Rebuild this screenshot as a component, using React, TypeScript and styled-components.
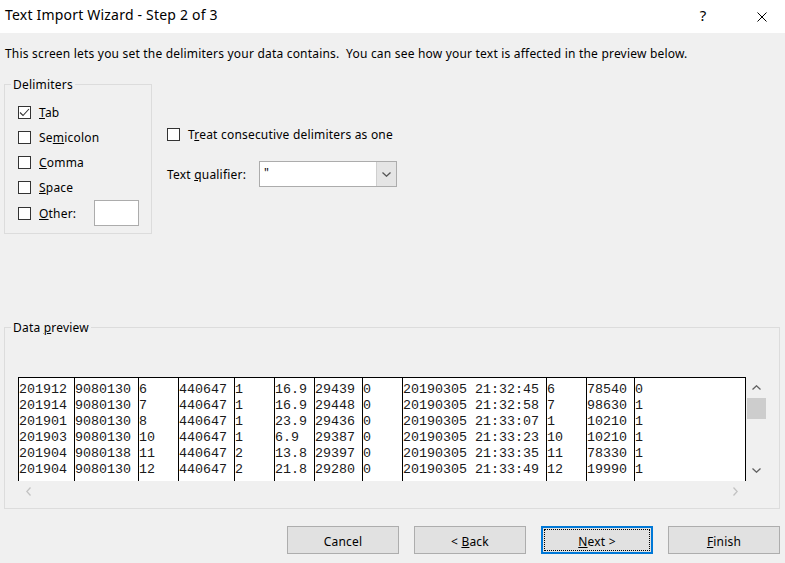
import React from "react";
import styled, { createGlobalStyle } from "styled-components";

const UI = `"Noto Sans", "Open Sans", "Liberation Sans", sans-serif`;

const Global = createGlobalStyle`
  html, body { margin: 0; padding: 0; background: #f0f0f0; }
  body { font-family: ${UI}; font-size: 12px; letter-spacing: 0.2px; color: #000; }
  * { box-sizing: border-box; }
`;

const Window = styled.div`
  width: 785px;
  height: 563px;
  display: flex;
  flex-direction: column;
  background: #f0f0f0;
  overflow: hidden;
`;

const TitleBar = styled.div`
  height: 33px;
  flex-shrink: 0;
  background: #fff;
  display: flex;
  align-items: center;
`;

const Title = styled.div`
  flex: 1;
  padding-left: 5px;
  font-size: 14px;
  line-height: 20px;
  margin-top: -3px;
`;

const CaptionButton = styled.div<{ $w: number; $mr?: number; $pb?: number }>`
  width: ${(p) => p.$w}px;
  margin-right: ${(p) => p.$mr ?? 0}px;
  height: 33px;
  padding-bottom: ${(p) => p.$pb ?? 0}px;
  display: flex;
  align-items: center;
  justify-content: center;
  font-size: 15px;
  color: #000;
`;

const Body = styled.div`
  flex: 1;
  display: flex;
  flex-direction: column;
  padding: 0 5px 0 4px;
`;

const Intro = styled.div`
  margin: 13px 0 0 1px;
  line-height: 16px;
  white-space: pre;
`;

const TopRow = styled.div`
  display: flex;
  align-items: flex-start;
  margin-top: 13px;
`;

const GroupBox = styled.fieldset<{ $w?: number }>`
  margin: 0;
  padding: 0;
  min-width: 0;
  border: 1px solid #dcdcdc;
  ${(p) => (p.$w ? `width: ${p.$w}px;` : "")}
`;

const Legend = styled.legend`
  margin-left: 6px;
  padding: 2px 2px 0;
  line-height: 16px;
  font-size: 12px;
`;

const DelimList = styled.div`
  display: flex;
  flex-direction: column;
  padding: 7px 12px 7px 13px;
`;

const CheckRow = styled.label<{ $h?: number }>`
  display: flex;
  align-items: center;
  gap: 8px;
  height: ${(p) => p.$h ?? 25}px;
  line-height: 16px;
`;

const CheckText = styled.span`
  padding-top: 1px;
`;

const Box = styled.span`
  width: 13px;
  height: 13px;
  flex-shrink: 0;
  border: 1px solid #333;
  background: #fff;
  display: flex;
  align-items: center;
  justify-content: center;
`;

const OtherInput = styled.span`
  margin-left: auto;
  width: 45px;
  height: 26px;
  background: #fff;
  border: 1px solid #acacac;
`;

const Options = styled.div`
  display: flex;
  flex-direction: column;
  margin-left: 15px;
  padding-top: 47px;
`;

const QualifierRow = styled.div`
  display: flex;
  align-items: center;
  margin-top: 14px;
  height: 26px;
`;

const QualifierLabel = styled.span`
  width: 92px;
  line-height: 16px;
  padding-top: 2px;
`;

const Select = styled.div`
  width: 138px;
  height: 26px;
  display: flex;
  background: #fff;
  border: 1px solid #acacac;
`;

const SelectValue = styled.div`
  flex: 1;
  padding-left: 4px;
  line-height: 22px;
`;

const SelectButton = styled.div`
  width: 20px;
  background: #e5e5e5;
  border-left: 1px solid #cfcfcf;
  display: flex;
  align-items: center;
  justify-content: center;
`;

const PreviewGroup = styled(GroupBox)`
  margin-top: 84px;
`;

const PreviewInner = styled.div`
  padding: 41px 12px 6px 13px;
`;

const PreviewControl = styled.div`
  display: grid;
  grid-template-columns: 1fr 21px;
  grid-template-rows: 104px 21px;
`;

const PreviewText = styled.div`
  background: #fff;
  border-top: 1px solid #000;
  border-right: 1px solid #000;
  display: flex;
  overflow: hidden;
  font-family: "Liberation Mono", "Courier New", monospace;
  font-size: 13.333px;
  letter-spacing: 0;
  line-height: 16.1px;
  color: #1a1a1a;
`;

const Col = styled.div<{ $w?: number }>`
  flex: ${(p) => (p.$w ? `0 0 ${p.$w}px` : "1 1 auto")};
  border-left: 1px solid #000;
  padding-top: 4px;
  white-space: pre;
  overflow: hidden;
`;

const VScroll = styled.div`
  display: flex;
  flex-direction: column;
  background: #f0f0f0;
`;

const HScroll = styled.div`
  display: flex;
  background: #f0f0f0;
`;

const ArrowBtn = styled.div<{ $w?: number; $h?: number }>`
  width: ${(p) => p.$w ?? 21}px;
  height: ${(p) => p.$h ?? 21}px;
  flex-shrink: 0;
  display: flex;
  align-items: center;
  justify-content: center;
`;

const Thumb = styled.div`
  height: 21px;
  margin: 0 1px;
  background: #cdcdcd;
`;

const Fill = styled.div`
  flex: 1;
`;

const Corner = styled.div`
  background: #f0f0f0;
`;

const ButtonRow = styled.div`
  display: flex;
  justify-content: flex-end;
  gap: 15px;
  margin-top: 17px;
`;

const Button = styled.div<{ $default?: boolean }>`
  width: 112px;
  height: 28px;
  padding-top: 3px;
  display: flex;
  align-items: center;
  justify-content: center;
  background: #e1e1e1;
  border: ${(p) => (p.$default ? "2px solid #0078d7" : "1px solid #adadad")};
  ${(p) => (p.$default ? "outline: 1px dotted #000; outline-offset: -4px;" : "")}
  line-height: 16px;
`;

const Chevron = ({ dir, color }: { dir: "up" | "down" | "left" | "right"; color: string }) => {
  const vertical = dir === "up" || dir === "down";
  const w = vertical ? 9 : 5;
  const h = vertical ? 5 : 9;
  const pts = {
    up: "0.5,4.5 4.5,0.8 8.5,4.5",
    down: "0.5,0.5 4.5,4.2 8.5,0.5",
    left: "4.5,0.5 0.8,4.5 4.5,8.5",
    right: "0.5,0.5 4.2,4.5 0.5,8.5",
  }[dir];
  return (
    <svg width={w} height={h} viewBox={`0 0 ${w} ${h}`}>
      <polyline points={pts} fill="none" stroke={color} strokeWidth="1.3" />
    </svg>
  );
};

const Check = () => (
  <svg width="11" height="11" viewBox="0 0 11 11">
    <polyline points="1,5.5 4,8.5 10,2" fill="none" stroke="#333" strokeWidth="1.1" />
  </svg>
);

const CheckBox = ({ checked }: { checked?: boolean }) => <Box>{checked ? <Check /> : null}</Box>;

const rows = [
  ["201912", "9080130", "6", "440647", "1", "16.9", "29439", "0", "20190305 21:32:45", "6", "78540", "0"],
  ["201914", "9080130", "7", "440647", "1", "16.9", "29448", "0", "20190305 21:32:58", "7", "98630", "1"],
  ["201901", "9080130", "8", "440647", "1", "23.9", "29436", "0", "20190305 21:33:07", "1", "10210", "1"],
  ["201903", "9080130", "10", "440647", "1", "6.9", "29387", "0", "20190305 21:33:23", "10", "10210", "1"],
  ["201904", "9080138", "11", "440647", "2", "13.8", "29397", "0", "20190305 21:33:35", "11", "78330", "1"],
  ["201904", "9080130", "12", "440647", "2", "21.8", "29280", "0", "20190305 21:33:49", "12", "19990", "1"],
];

const colWidths = [56, 64, 40, 56, 40, 40, 48, 40, 144, 40, 48, 0];

export default function App() {
  return (
    <>
      <Global />
      <Window>
        <TitleBar>
          <Title>Text Import Wizard - Step 2 of 3</Title>
          <CaptionButton $w={46} $mr={13} $pb={4}>?</CaptionButton>
          <CaptionButton $w={46}>
            <svg width="10" height="10" viewBox="0 0 10 10">
              <path d="M0.5 0.5 L9.5 9.5 M9.5 0.5 L0.5 9.5" stroke="#000" strokeWidth="1" />
            </svg>
          </CaptionButton>
        </TitleBar>
        <Body>
          <Intro>
            This screen lets you set the delimiters your data contains.  You can see how your text is affected in the preview below.
          </Intro>
          <TopRow>
            <GroupBox $w={148}>
              <Legend>Delimiters</Legend>
              <DelimList>
                <CheckRow>
                  <CheckBox checked />
                  <CheckText><u>T</u>ab</CheckText>
                </CheckRow>
                <CheckRow>
                  <CheckBox />
                  <CheckText>Se<u>m</u>icolon</CheckText>
                </CheckRow>
                <CheckRow>
                  <CheckBox />
                  <CheckText><u>C</u>omma</CheckText>
                </CheckRow>
                <CheckRow>
                  <CheckBox />
                  <CheckText><u>S</u>pace</CheckText>
                </CheckRow>
                <CheckRow $h={26}>
                  <CheckBox />
                  <CheckText><u>O</u>ther:</CheckText>
                  <OtherInput />
                </CheckRow>
              </DelimList>
            </GroupBox>
            <Options>
              <CheckRow>
                <CheckBox />
                <CheckText>T<u>r</u>eat consecutive delimiters as one</CheckText>
              </CheckRow>
              <QualifierRow>
                <QualifierLabel>Text <u>q</u>ualifier:</QualifierLabel>
                <Select>
                  <SelectValue>"</SelectValue>
                  <SelectButton>
                    <Chevron dir="down" color="#555" />
                  </SelectButton>
                </Select>
              </QualifierRow>
            </Options>
          </TopRow>
          <PreviewGroup>
            <Legend>Data <u>p</u>review</Legend>
            <PreviewInner>
              <PreviewControl>
                <PreviewText>
                  {colWidths.map((w, i) => (
                    <Col key={i} $w={w || undefined}>
                      {rows.map((r) => r[i]).join("\n")}
                    </Col>
                  ))}
                </PreviewText>
                <VScroll>
                  <ArrowBtn>
                    <Chevron dir="up" color="#606060" />
                  </ArrowBtn>
                  <Thumb />
                  <Fill />
                  <ArrowBtn>
                    <Chevron dir="down" color="#606060" />
                  </ArrowBtn>
                </VScroll>
                <HScroll>
                  <ArrowBtn>
                    <Chevron dir="left" color="#c2c2c2" />
                  </ArrowBtn>
                  <Fill />
                  <ArrowBtn>
                    <Chevron dir="right" color="#c2c2c2" />
                  </ArrowBtn>
                </HScroll>
                <Corner />
              </PreviewControl>
            </PreviewInner>
          </PreviewGroup>
          <ButtonRow>
            <Button><span>Cancel</span></Button>
            <Button><span>&lt; <u>B</u>ack</span></Button>
            <Button $default><span><u>N</u>ext &gt;</span></Button>
            <Button><span><u>F</u>inish</span></Button>
          </ButtonRow>
        </Body>
      </Window>
    </>
  );
}
